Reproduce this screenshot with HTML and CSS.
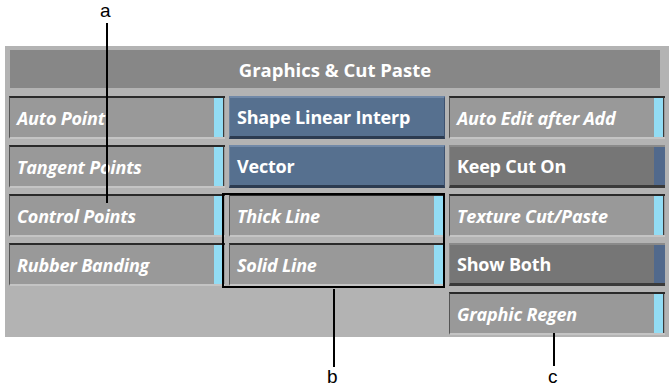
FILE: index.html
```html
<!DOCTYPE html>
<html lang="en">
<head>
    <meta charset="UTF-8">
    <title>Graphics &amp; Cut Paste</title>
    <link rel="stylesheet" href="styles.css">
</head>
<body>
    <div class="figure">
        <div class="panel">
            <div class="title">Graphics &amp; Cut Paste</div>
            <div class="grid">
                <div class="btn toggle">Auto Point</div>
                <div class="btn blue">Shape Linear Interp</div>
                <div class="btn toggle">Auto Edit after Add</div>

                <div class="btn toggle">Tangent Points</div>
                <div class="btn blue">Vector</div>
                <div class="btn dark">Keep Cut On</div>

                <div class="btn toggle">Control Points</div>
                <div class="btn toggle">Thick Line</div>
                <div class="btn toggle">Texture Cut/Paste</div>

                <div class="btn toggle">Rubber Banding</div>
                <div class="btn toggle">Solid Line</div>
                <div class="btn dark">Show Both</div>

                <div class="empty"></div>
                <div class="empty"></div>
                <div class="btn toggle">Graphic Regen</div>
            </div>
        </div>

        <!-- callouts -->
        <span class="label label-a">a</span>
        <div class="line line-a"></div>
        <div class="bracket"></div>
        <div class="line line-b"></div>
        <span class="label label-b">b</span>
        <div class="line line-c"></div>
        <span class="label label-c">c</span>
    </div>
</body>
</html>
```

FILE: styles.css
```css
body {
    margin: 0;
    background: #fff;
    font-family: "Open Sans", "DejaVu Sans", sans-serif;
}

.figure {
    position: relative;
    width: 672px;
    height: 387px;
    padding-top: 46px;
    box-sizing: border-box;
}

.panel {
    margin-left: 5px;
    width: 664px;
    height: 291px;
    background: #b3b3b3;
    padding: 4px;
    box-sizing: border-box;
}

.title {
    margin: 0 5px 0 1px;
    height: 38px;
    background: #878787;
    color: #fff;
    font-weight: 700;
    font-size: 18.5px;
    display: flex;
    align-items: center;
    justify-content: center;
}

.grid {
    margin-top: 8px;
    display: grid;
    grid-template-columns: 216px 216px 216px;
    grid-auto-rows: 43px;
    column-gap: 4px;
    row-gap: 6px;
}

.btn {
    color: #fff;
    font-size: 18px;
    font-weight: 700;
    letter-spacing: -0.2px;
    display: flex;
    align-items: center;
    padding-left: 7px;
    box-sizing: border-box;
    white-space: nowrap;
    position: relative;
}

.toggle {
    background: #999;
    font-style: italic;
    border-top: 2px solid #2a2a2a;
    border-left: 1px solid #555;
    border-bottom: 2px solid #c4c4c4;
}

.toggle::after {
    content: "";
    position: absolute;
    top: 0;
    right: 1px;
    bottom: 0;
    width: 9px;
    background: #92dcf4;
    border-right: 1px solid #3a3a3a;
}

.blue {
    background: #56708f;
    border-top: 2px solid #7189a8;
    border-left: 1px solid #6c83a0;
    border-right: 1px solid #3e5270;
    border-bottom: 3px solid #2c3b50;
}

.dark {
    background: #767676;
    border-top: 2px solid #8a8a8a;
    border-left: 1px solid #888;
    border-bottom: 3px solid #3a3a3a;
}

.dark::after {
    content: "";
    position: absolute;
    top: 0;
    right: 0;
    bottom: 0;
    width: 11px;
    background: #51698c;
}

.label {
    position: absolute;
    font-family: "Liberation Sans", Arial, sans-serif;
    font-size: 19px;
    color: #000;
    line-height: 1;
}

.label-a { left: 100px; top: 1px; }
.label-b { left: 327px; top: 367px; }
.label-c { left: 548px; top: 367px; }

.line {
    position: absolute;
    width: 2px;
    background: #000;
}

.line-a { left: 106px; top: 23px; height: 180px; }
.line-b { left: 333px; top: 289px; height: 78px; }
.line-c { left: 553px; top: 333px; height: 33px; }

.bracket {
    position: absolute;
    left: 222px;
    top: 193px;
    width: 223px;
    height: 95px;
    border: 2px solid #000;
    box-sizing: border-box;
}
```
